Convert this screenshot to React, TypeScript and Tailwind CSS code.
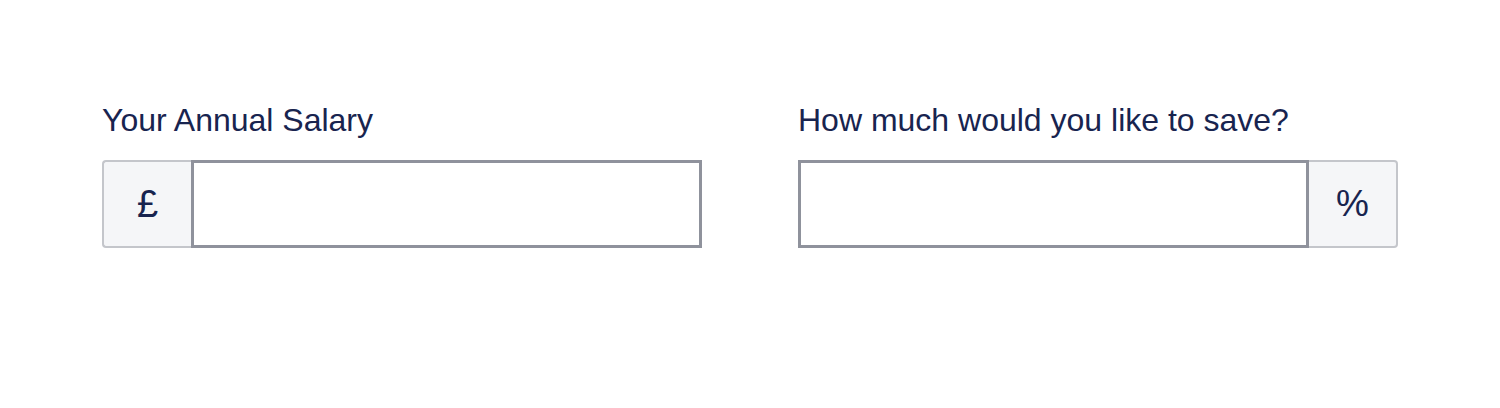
export default function App() {
  return (
    <div className="w-[1500px] h-[408px] bg-white px-[102px] pt-[102px] font-['Liberation_Sans',Arial,sans-serif] text-[#18244f]">
      <div className="grid grid-cols-2 gap-[96px]">
        <div>
          <label className="block text-[32px] leading-[36px] mb-[22px]">Your Annual Salary</label>
          <div className="flex h-[88px]">
            <span className="flex w-[89px] items-center justify-center rounded-l-[4px] border-2 border-r-0 border-[#c4c6cb] bg-[#f5f6f8] text-[38px]">£</span>
            <input className="min-w-0 flex-1 border-[3px] border-[#8f929c] bg-white px-4 text-[30px] outline-none" />
          </div>
        </div>
        <div>
          <label className="block text-[32px] leading-[36px] mb-[22px]">How much would you like to save?</label>
          <div className="flex h-[88px]">
            <input className="min-w-0 flex-1 border-[3px] border-[#8f929c] bg-white px-4 text-[30px] outline-none" />
            <span className="flex w-[89px] items-center justify-center rounded-r-[4px] border-2 border-l-0 border-[#c4c6cb] bg-[#f5f6f8] text-[37px]">%</span>
          </div>
        </div>
      </div>
    </div>
  );
}
